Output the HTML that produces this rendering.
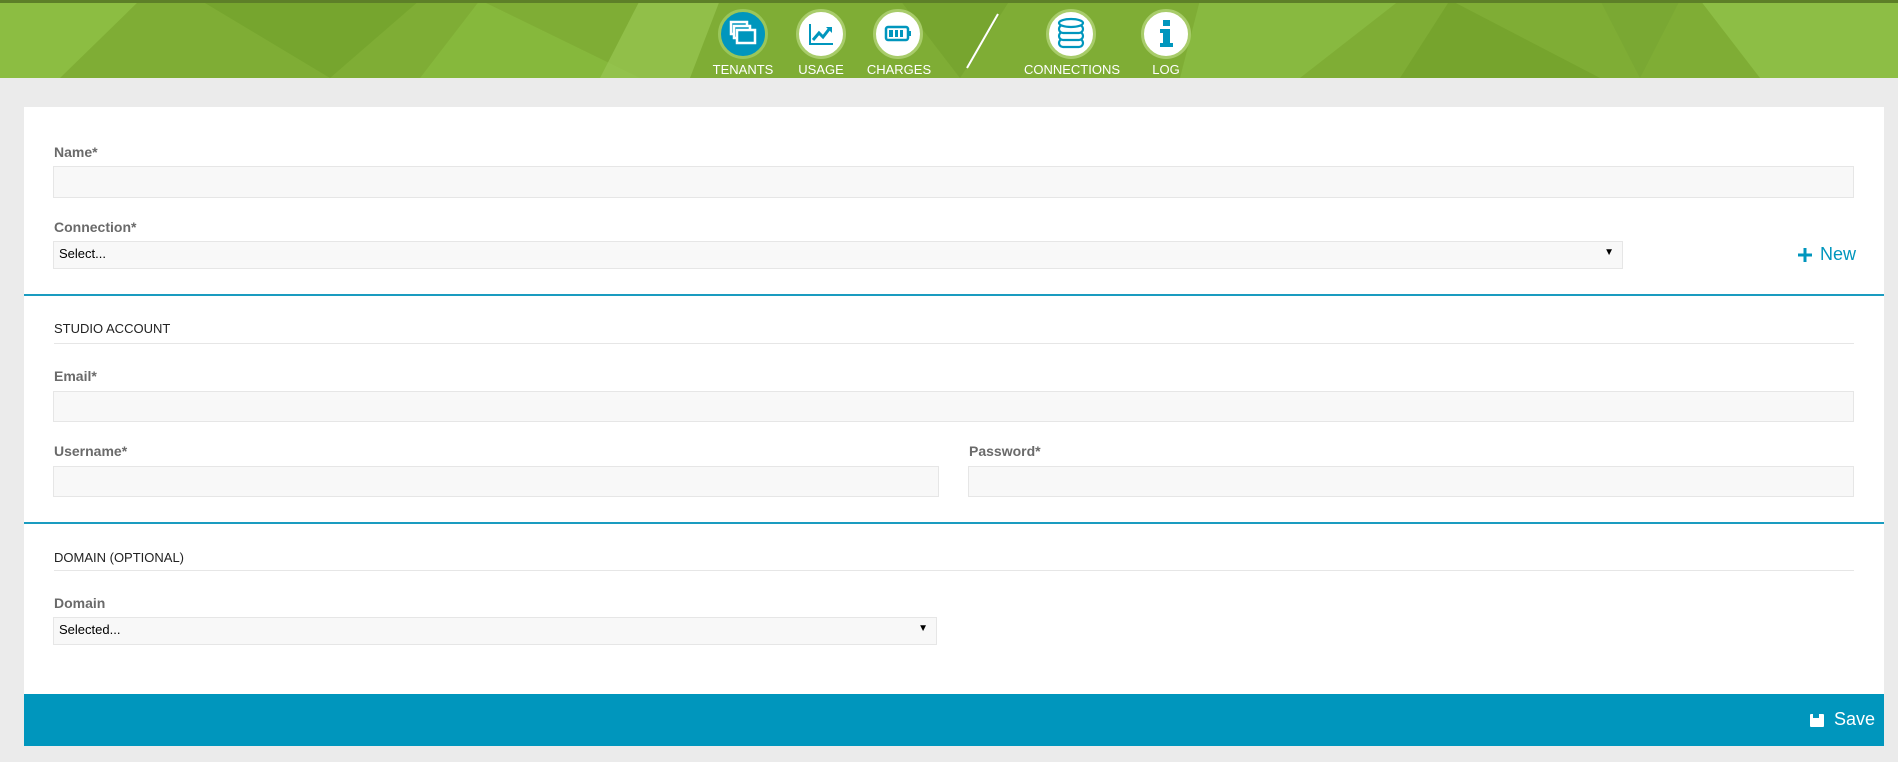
<!DOCTYPE html>
<html><head><meta charset="utf-8"><style>
*{margin:0;padding:0;box-sizing:border-box}
body{width:1898px;height:762px;background:#ebebeb;font-family:"Liberation Sans",sans-serif;position:relative;overflow:hidden}
.hdr{position:absolute;left:0;top:0;width:1898px;height:78px;background:#7fad35;border-top:3px solid #5d7f28;overflow:hidden}
.a{position:absolute}
.circ{position:absolute;width:50px;height:50px;border-radius:50%;background:#fff;border:3px solid #a8cc6a;top:6px}
.lbl{position:absolute;top:59px;color:#fff;font-size:13px;transform:translateX(-50%);white-space:nowrap}
.card{position:absolute;left:24px;top:107px;width:1860px;height:639px;background:#fff}
.l{position:absolute;left:54px;font-size:14px;font-weight:bold;color:#6a6a6a}
.in{position:absolute;background:#f8f8f8;border:1px solid #e6e6e6}
.sel{font-size:13px;color:#000;padding:4px 0 0 5px}
.arr{position:absolute;right:8px;top:5px;font-size:10px}
.h{position:absolute;left:54px;font-size:13px;color:#222}
.gl{position:absolute;left:54px;width:1800px;height:1px;background:#e6e6e6}
.bl{position:absolute;left:24px;width:1860px;height:2px;background:#1a9cc0}
</style></head><body>
<div class="hdr">
<svg width="1898" height="78" style="position:absolute;left:0;top:-3px">
<polygon points="0,0 140,0 60,78 0,78" fill="#8cbd42"/>
<polygon points="200,0 420,0 330,78" fill="#76a52e"/>
<polygon points="480,0 640,78 420,78" fill="#86b83c"/>
<polygon points="640,0 720,0 690,78 600,78" fill="#98c653" opacity=".7"/>
<polygon points="900,0 1010,0 960,78" fill="#77a52f"/>
<polygon points="1200,0 1400,0 1300,78 1180,78" fill="#88b940"/>
<polygon points="1450,0 1600,78 1400,78" fill="#76a42d"/>
<polygon points="1700,0 1898,0 1898,78 1760,78" fill="#8dbe45"/>
<polygon points="1600,0 1680,0 1640,78" fill="#7aa833"/>
</svg>
<svg width="1898" height="78" style="position:absolute;left:0;top:-3px"><line x1="998" y1="14" x2="967" y2="68" stroke="#fff" stroke-width="2"/></svg>
<div class="circ" style="left:718px;background:#0096bd;border-color:#9ac65a">
<svg width="44" height="44"><g fill="#0096bd" stroke="#fff" stroke-width="2.5"><rect x="10" y="10" width="16" height="12"/><rect x="13" y="14" width="16" height="12"/><rect x="16" y="18" width="18" height="13"/></g></svg></div>
<div class="circ" style="left:796px"><svg width="44" height="44"><path d="M11 12V32H34" stroke="#0096bd" stroke-width="2" fill="none"/><path d="M14 28L20 21 24 25 31 16" stroke="#0096bd" stroke-width="3" fill="none"/><path d="M27 15H33V21Z" fill="#0096bd"/></svg></div>
<div class="circ" style="left:873px"><svg width="44" height="44"><rect x="10" y="15" width="22" height="13" rx="2" fill="none" stroke="#0096bd" stroke-width="2.5"/><rect x="32" y="19" width="3" height="5" fill="#0096bd"/><rect x="13" y="18" width="4" height="7" fill="#0096bd"/><rect x="19" y="18" width="3" height="7" fill="#0096bd"/><rect x="24" y="18" width="3" height="7" fill="#0096bd"/></svg></div>
<div class="circ" style="left:1046px"><svg width="44" height="44"><g fill="#fff" stroke="#0096bd" stroke-width="2.2"><rect x="10" y="27" width="24" height="8" rx="4"/><rect x="10" y="20" width="24" height="8" rx="4"/><rect x="10" y="13" width="24" height="8" rx="4"/><ellipse cx="22" cy="11" rx="12" ry="4"/></g></svg></div>
<div class="circ" style="left:1141px"><svg width="44" height="44"><rect x="19" y="8" width="7" height="6" fill="#0096bd"/><path d="M16 17H26V31H29V35H16V31H19V21H16Z" fill="#0096bd"/></svg></div>
<div class="lbl" style="left:743px">TENANTS</div>
<div class="lbl" style="left:821px">USAGE</div>
<div class="lbl" style="left:899px">CHARGES</div>
<div class="lbl" style="left:1072px">CONNECTIONS</div>
<div class="lbl" style="left:1166px">LOG</div>
</div>
<div class="card"></div>
<div class="l" style="top:144px">Name*</div>
<div class="in" style="left:53px;top:166px;width:1801px;height:32px"></div>
<div class="l" style="top:219px">Connection*</div>
<div class="in sel" style="left:53px;top:241px;width:1570px;height:28px">Select...<span class="arr">▼</span></div>
<svg class="a" style="left:1797px;top:247px" width="16" height="16"><path d="M8 1V15M1 8H15" stroke="#0096bd" stroke-width="3"/></svg>
<div class="a" style="left:1820px;top:244px;color:#0096bd;font-size:18px">New</div>
<div class="bl" style="top:294px"></div>
<div class="h" style="top:321px">STUDIO ACCOUNT</div>
<div class="gl" style="top:343px"></div>
<div class="l" style="top:368px">Email*</div>
<div class="in" style="left:53px;top:391px;width:1801px;height:31px"></div>
<div class="l" style="top:443px">Username*</div>
<div class="l" style="top:443px;left:969px">Password*</div>
<div class="in" style="left:53px;top:466px;width:886px;height:31px"></div>
<div class="in" style="left:968px;top:466px;width:886px;height:31px"></div>
<div class="bl" style="top:522px"></div>
<div class="h" style="top:550px">DOMAIN (OPTIONAL)</div>
<div class="gl" style="top:570px"></div>
<div class="l" style="top:595px">Domain</div>
<div class="in sel" style="left:53px;top:617px;width:884px;height:28px">Selected...<span class="arr">▼</span></div>
<div class="a" style="left:24px;top:694px;width:1860px;height:52px;background:#0096bd"></div>
<div class="a" style="left:1810px;top:714px;width:14px;height:13px;background:#fff;border-radius:1px"><div style="position:absolute;left:3px;top:0;width:6px;height:4px;background:#0096bd"></div></div>
<div class="a" style="left:1834px;top:709px;color:#fff;font-size:18px">Save</div>
</body></html>
